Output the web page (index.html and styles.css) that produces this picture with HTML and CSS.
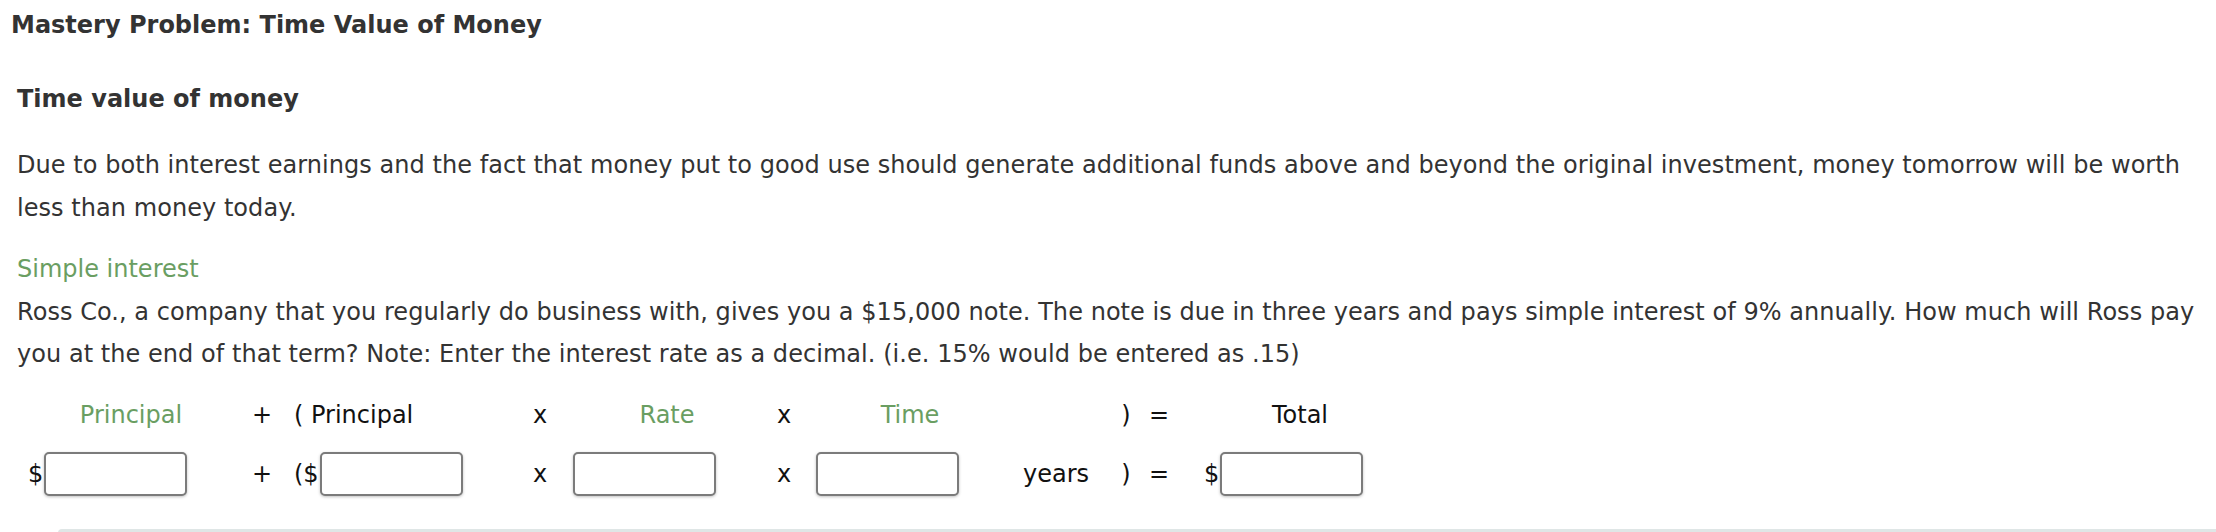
FILE: index.html
```html
<!DOCTYPE html>
<html lang="en">

<head>
    <meta charset="UTF-8">
    <meta name="viewport" content="width=device-width, initial-scale=1.0">
    <title>Mastery Problem: Time Value of Money</title>
    <link rel="stylesheet" href="styles.css">
</head>

<body>
    <div id="title">Mastery Problem: Time Value of Money</div>

    <div class="problem">
        <div class="heading">Time value of money</div>

        <p class="text">Due to both interest earnings and the fact that money put to good use should generate additional funds above and beyond the original investment, money tomorrow will be worth less than money today.</p>

        <div class="section-title">Simple interest</div>
        <p class="text">Ross Co., a company that you regularly do business with, gives you a $15,000 note. The note is due in three years and pays simple interest of 9% annually. How much will Ross pay you at the end of that term? Note: Enter the interest rate as a decimal. (i.e. 15% would be entered as .15)</p>

        <!-- formula: principal + (principal x rate x time) = total -->
        <div class="formula">
            <div class="cell c-principal green">Principal</div>
            <div class="cell c-op">+</div>
            <div class="cell c-open">( Principal</div>
            <div class="cell c-op">x</div>
            <div class="cell c-rate green">Rate</div>
            <div class="cell c-op">x</div>
            <div class="cell c-time green">Time</div>
            <div class="cell"></div>
            <div class="cell c-op">)</div>
            <div class="cell c-op">=</div>
            <div class="cell c-total">Total</div>

            <div class="cell c-principal-in">$<input type="text"></div>
            <div class="cell c-op">+</div>
            <div class="cell c-open">($<input type="text"></div>
            <div class="cell c-op">x</div>
            <div class="cell c-rate-in"><input type="text"></div>
            <div class="cell c-op">x</div>
            <div class="cell c-time-in"><input type="text"></div>
            <div class="cell c-years">years</div>
            <div class="cell c-op">)</div>
            <div class="cell c-op">=</div>
            <div class="cell c-total-in">$<input type="text"></div>
        </div>
    </div>

    <div class="next-box"></div>
</body>

</html>
```

FILE: styles.css
```css
body {
    background-color: white;
    color: #333;
    margin: 0;
    padding: 0;
    font-family: "DejaVu Sans", Verdana, sans-serif;
    font-size: 24px;
    overflow: hidden;
}

#title {
    font-weight: bold;
    padding: 10px 11px 0;
    height: 34px;
    line-height: 30px;
}

.problem {
    padding: 0 0 0 17px;
    width: 2197px;
}

.heading {
    font-weight: bold;
    margin-top: 38px;
    line-height: 34px;
}

.text {
    margin: 0;
    line-height: 42.5px;
    letter-spacing: 0.05px;
}

.heading + .text {
    margin-top: 28px;
}

.section-title {
    color: #6a9e62;
    margin-top: 19px;
    line-height: 42.5px;
}

.green {
    color: #6a9e62;
}

.formula {
    display: grid;
    grid-template-columns: 222px 40px 228px 60px 194px 40px 212px 94px 32px 34px 248px;
    grid-template-rows: 53px 64px;
    margin: 13px 0 0 3px;
    color: #111;
}

.cell {
    display: flex;
    align-items: center;
    white-space: nowrap;
}

.c-op,
.c-principal,
.c-rate,
.c-time,
.c-total {
    justify-content: center;
}

.c-principal-in {
    padding-left: 8px;
}

.c-open {
    padding-left: 12px;
}

.c-rate-in {
    padding-left: 2px;
}

.c-time-in {
    padding-left: 11px;
}

.c-years {
    padding-left: 7px;
}

.c-total-in {
    padding-left: 28px;
}

input {
    width: 143px;
    height: 44px;
    box-sizing: border-box;
    margin: 0 0 0 1px;
    border: 2px solid #7b7b7b;
    border-radius: 5px;
    box-shadow: 0 1px 3px rgba(0, 0, 0, 0.25);
    background: white;
    font-family: inherit;
    font-size: 20px;
}

.next-box {
    margin: 23px 0 0 58px;
    height: 4px;
    border-radius: 4px 0 0 0;
    background-color: #dfe6e6;
}
```
